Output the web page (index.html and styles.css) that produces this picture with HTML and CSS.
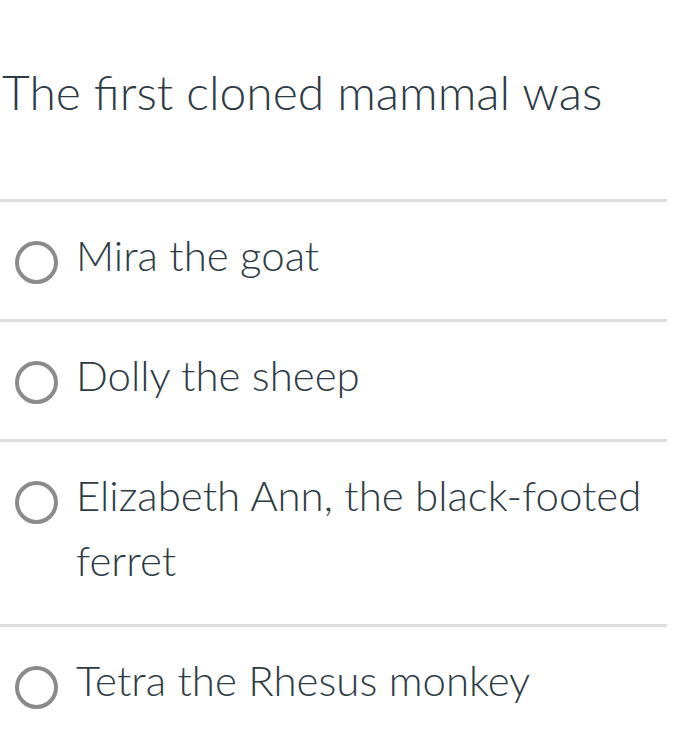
FILE: index.html
```html
<!DOCTYPE html>
<html>
<head>
<meta charset="utf-8">
<link rel="stylesheet" href="styles.css">
</head>
<body>
<div class="quiz">
  <div class="question">The first cloned mammal was</div>
  <div class="answers">
    <label class="answer"><span class="radio"></span><span class="text">Mira the goat</span></label>
    <label class="answer"><span class="radio"></span><span class="text">Dolly the sheep</span></label>
    <label class="answer"><span class="radio"></span><span class="text">Elizabeth Ann, the black-footed ferret</span></label>
    <label class="answer"><span class="radio"></span><span class="text">Tetra the Rhesus monkey</span></label>
  </div>
</div>
</body>
</html>
```
FILE: styles.css
```css
html, body {
  margin: 0;
  padding: 0;
  background: #ffffff;
}
body {
  font-family: "Lato Light", "Lato", "Liberation Sans", sans-serif;
  font-weight: 300;
  color: #2d3b45;
}
.quiz {
  width: 667px;
}
.question {
  font-size: 48px;
  line-height: 65px;
  padding: 59px 0 75px 2px;
}
.answers {
  display: flex;
  flex-direction: column;
}
.answer {
  display: flex;
  align-items: flex-start;
  border-top: 3px solid #dedede;
  padding: 21px 20px 31px 15px;
}
.radio {
  flex: none;
  width: 35px;
  height: 35px;
  border: 4px solid #8b8b8b;
  border-radius: 50%;
  margin-top: 18px;
  margin-right: 18px;
}
.text {
  font-size: 42px;
  line-height: 65px;
}
```
